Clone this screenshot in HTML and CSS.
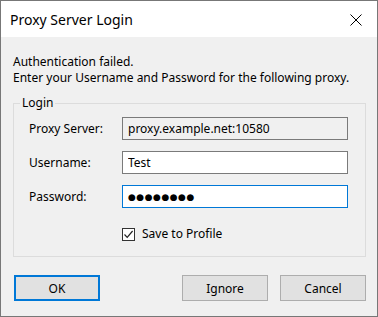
FILE: index.html
```html
<!DOCTYPE html>
<html lang="en">
<head>
  <meta charset="UTF-8" />
  <title>Proxy Server Login</title>
  <link rel="stylesheet" href="styles.css">
</head>
<body>

  <div class="dialog">
    <!-- title bar -->
    <div class="titlebar">
      <span class="title">Proxy Server Login</span>
      <span class="close">
        <svg width="12" height="12" viewBox="0 0 12 12">
          <path d="M0.5 0.5 L11.5 11.5 M11.5 0.5 L0.5 11.5" stroke="#000" stroke-width="1" fill="none" />
        </svg>
      </span>
    </div>

    <div class="content">
      <p class="message">
        Authentication failed.<br />
        Enter your Username and Password for the following proxy.
      </p>

      <fieldset class="group">
        <legend>Login</legend>

        <div class="field-row">
          <label for="proxy">Proxy Server:</label>
          <input id="proxy" class="readonly" type="text" value="proxy.example.net:10580" readonly />
        </div>
        <div class="field-row">
          <label for="user">Username:</label>
          <input id="user" type="text" value="Test" />
        </div>
        <div class="field-row">
          <label for="pass">Password:</label>
          <div id="pass" class="textbox focused">&#9679;&#9679;&#9679;&#9679;&#9679;&#9679;&#9679;&#9679;</div>
        </div>

        <div class="check-row">
          <span class="checkbox">
            <svg width="11" height="11" viewBox="0 0 11 11">
              <path d="M1.5 5.5 L4.2 8.3 L9.6 2" stroke="#222" stroke-width="1.2" fill="none" />
            </svg>
          </span>
          <span>Save to Profile</span>
        </div>
      </fieldset>

      <div class="buttons">
        <button class="btn default">OK</button>
        <div class="btn-group">
          <button class="btn">Ignore</button>
          <button class="btn">Cancel</button>
        </div>
      </div>
    </div>
  </div>

</body>
</html>
```

FILE: styles.css
```css
html, body {
  margin: 0;
  padding: 0;
  background: #f0f0f0;
}
body {
  font-family: "Noto Sans", "Liberation Sans", Arial, sans-serif;
  font-size: 12px;
  color: #000;
}
.dialog {
  width: 378px;
  height: 317px;
  box-sizing: border-box;
  border: 1px solid #777;
  background: #f0f0f0;
}
.titlebar {
  height: 36px;
  background: #fff;
  display: flex;
  align-items: center;
  justify-content: space-between;
  padding: 0 15px 0 9px;
}
.title {
  font-size: 14px;
  color: #000;
}
.close {
  display: flex;
  margin-top: 1px;
}
.content {
  padding: 17px 11px 0 12px;
}
.message {
  margin: 0;
  line-height: 16px;
}
.group {
  margin: 9px 0 0 0;
  padding: 0 15px 14px 15px;
  border: 1px solid #dcdcdc;
}
.group legend {
  margin-left: -9px;
  padding: 0 2px;
  line-height: 16px;
}
.field-row {
  display: grid;
  grid-template-columns: 93px 226px;
  align-items: center;
  margin-top: 11px;
}
.field-row:first-of-type {
  margin-top: 6px;
}
.field-row input,
.textbox {
  box-sizing: border-box;
  height: 23px;
  width: 226px;
  margin: 0;
  padding: 0 5px;
  border: 1px solid #7a7a7a;
  background: #fff;
  font-family: inherit;
  font-size: 12px;
  color: #000;
  outline: none;
}
.field-row input.readonly {
  background: #f0f0f0;
}
.textbox {
  display: flex;
  align-items: center;
}
.textbox.focused {
  border-color: #0078d7;
  font-family: "DejaVu Sans", sans-serif;
  font-size: 9px;
  letter-spacing: 0.5px;
}
.check-row {
  display: flex;
  align-items: center;
  margin: 18px 0 0 93px;
  line-height: 16px;
}
.checkbox {
  box-sizing: border-box;
  width: 13px;
  height: 13px;
  border: 1px solid #333;
  background: #fff;
  display: flex;
  align-items: center;
  justify-content: center;
  margin-right: 7px;
}
.buttons {
  display: flex;
  justify-content: space-between;
  margin-top: 18px;
  padding-left: 1px;
}
.btn-group {
  display: flex;
  gap: 12px;
}
.btn {
  box-sizing: border-box;
  width: 86px;
  height: 26px;
  margin: 0;
  padding: 0;
  background: #e1e1e1;
  border: 1px solid #adadad;
  font-family: inherit;
  font-size: 12px;
  color: #000;
}
.btn.default {
  border: 2px solid #0078d7;
}
```
